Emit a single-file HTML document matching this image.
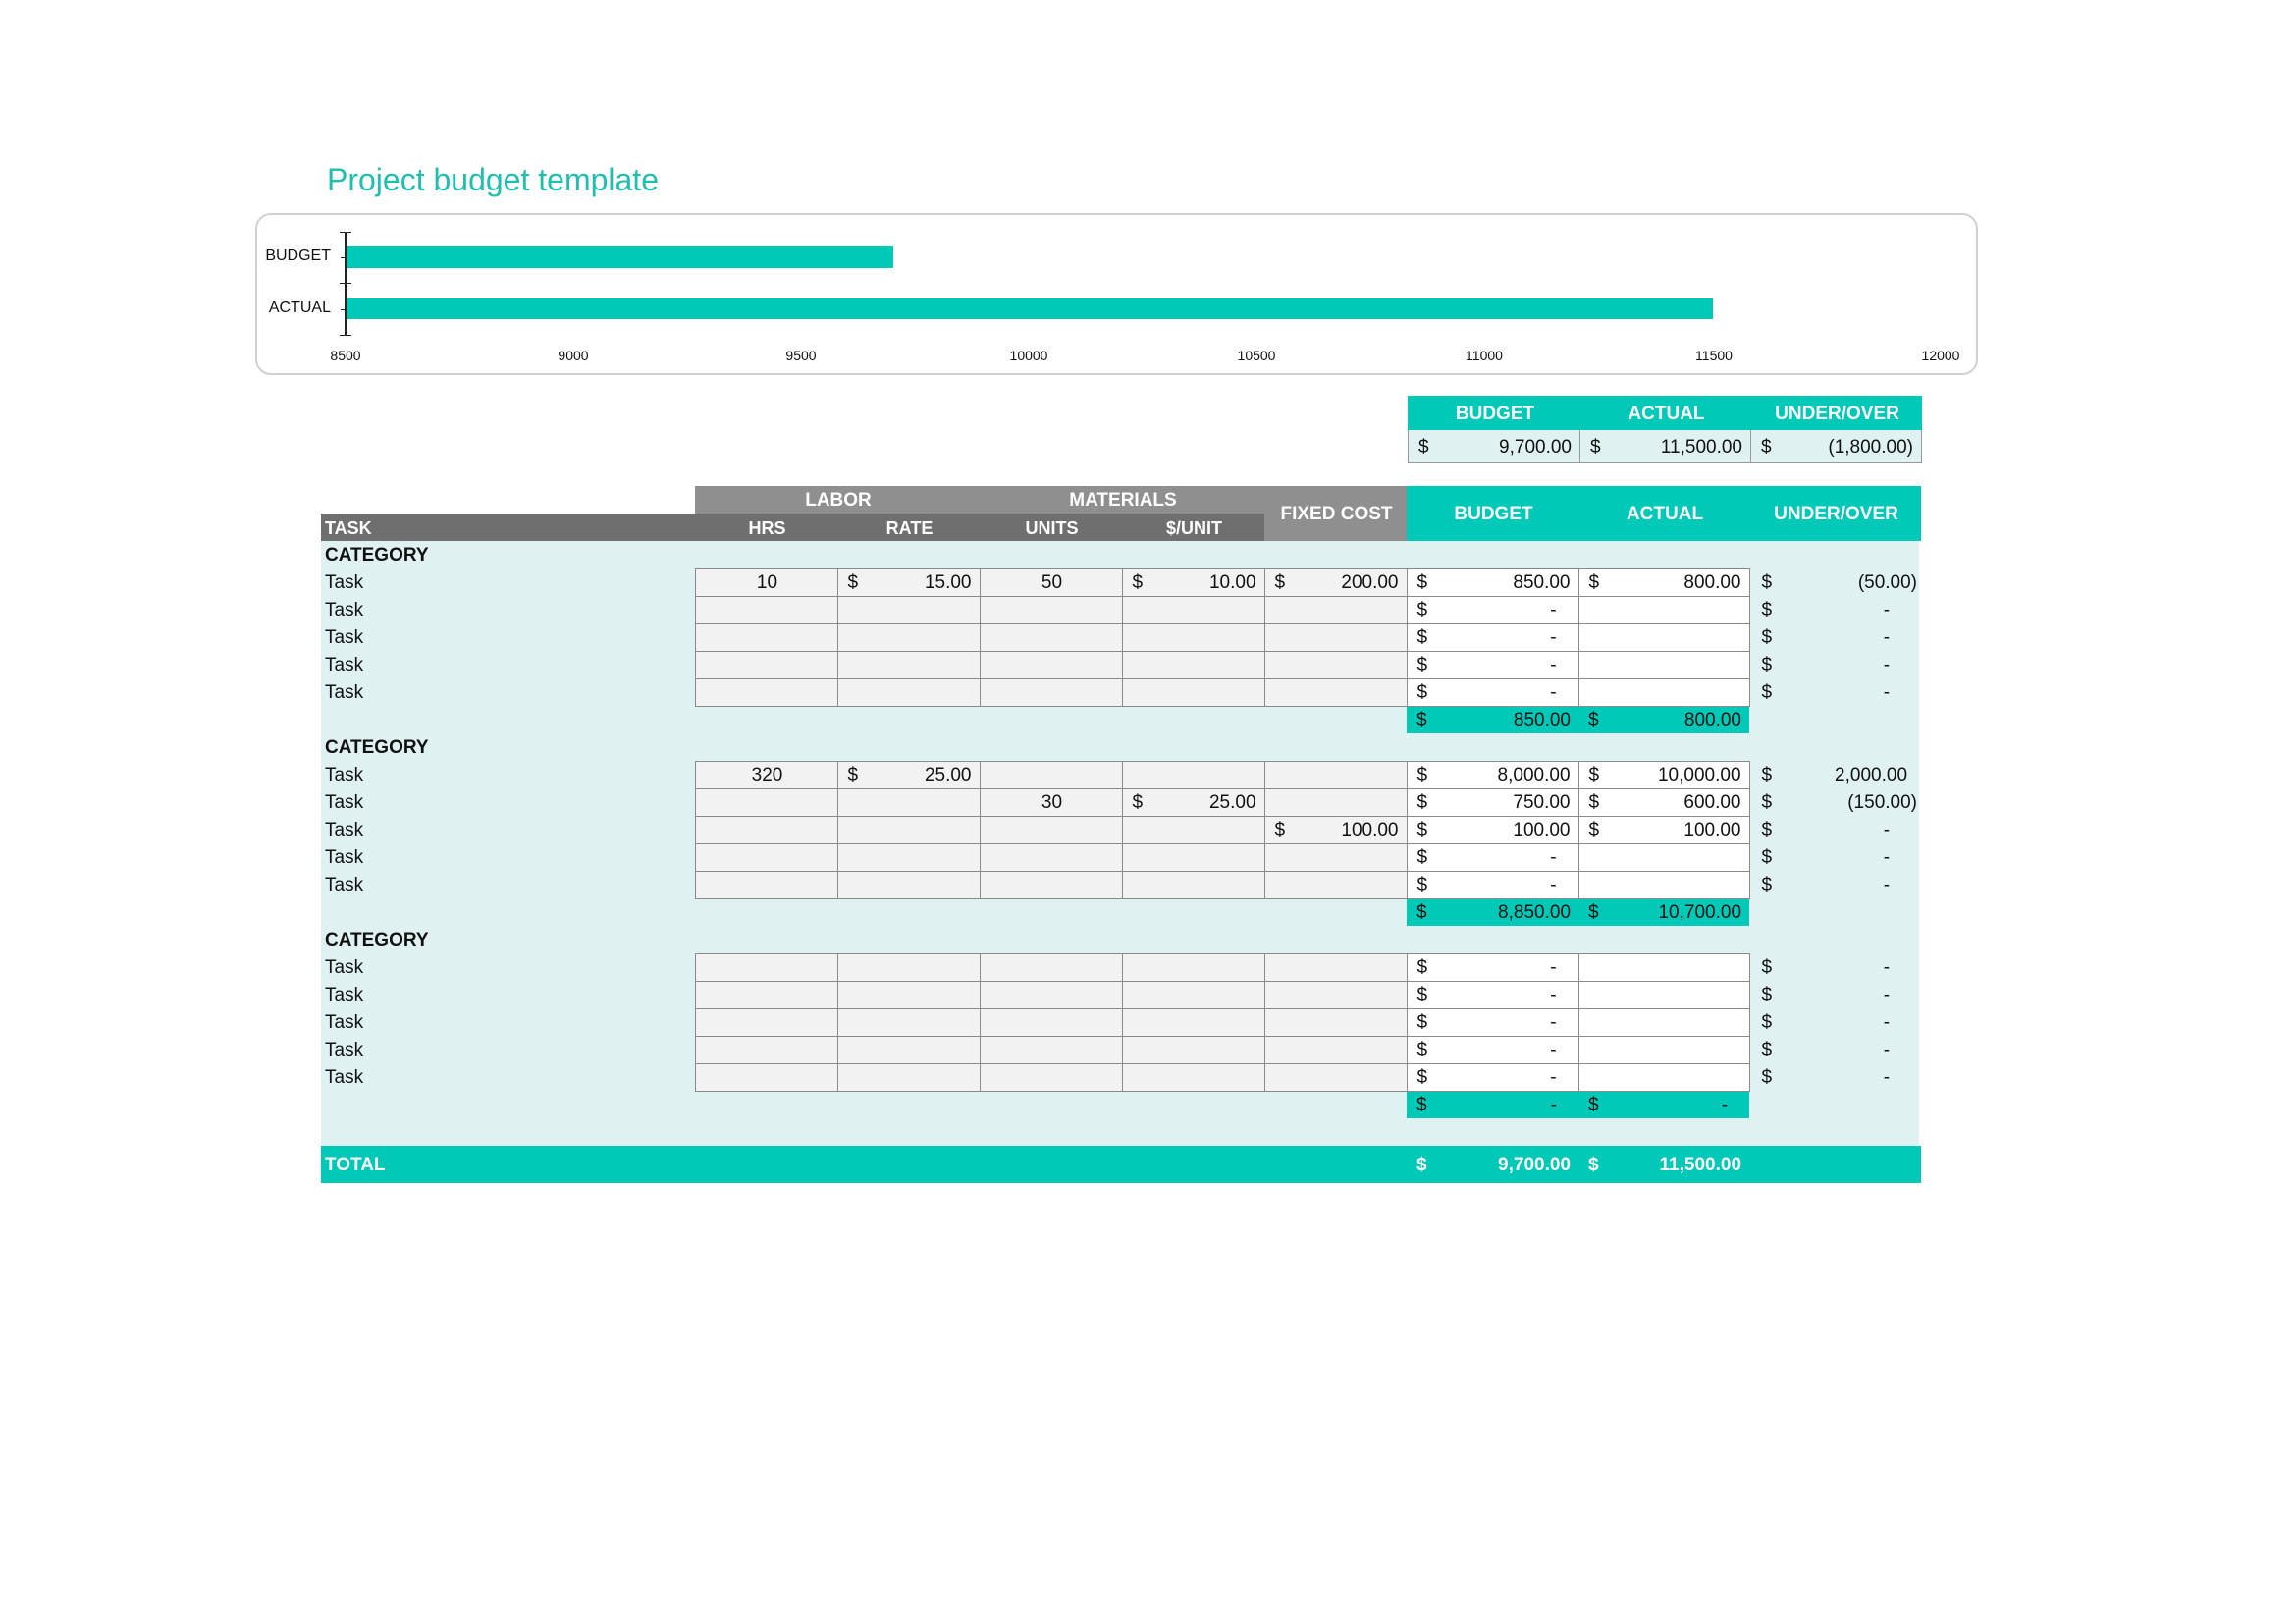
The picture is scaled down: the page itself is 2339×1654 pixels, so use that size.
<!DOCTYPE html>
<html><head><meta charset="utf-8"><style>
*{margin:0;padding:0;box-sizing:border-box}
body{width:2339px;height:1654px;background:#fff;position:relative;font-family:"Liberation Sans",Arial,sans-serif;overflow:hidden}
.a{position:absolute}
.title{left:333px;top:165px;font-size:32px;color:#1fbfad;white-space:nowrap}
.box{left:260px;top:217px;width:1755px;height:165px;border:2px solid #d0d0d0;border-radius:16px}
.lbl{font-size:16px;color:#111;width:80px;text-align:right;left:257px}
.tk{font-size:14px;color:#111;top:354px;width:80px;text-align:center}
.bar{background:#00c9b7}
.ax{background:#222}
table{border-collapse:collapse;table-layout:fixed}
td{height:28px;font-size:19px;color:#111;padding:2px 8px 0 10px;white-space:nowrap;overflow:hidden}
.sum td{border:1px solid #999;height:34px}
.sum .h{background:#00c9b7;color:#fff;font-weight:bold;text-align:center;border-color:#00c9b7}
.sum .v{background:#dff2f1;text-align:right;font-size:19px}
.d{float:left}
.main .g1{background:#8f8f8f;color:#fff;font-weight:bold;text-align:center}
.main .g2{background:#6f6f6f;color:#fff;font-weight:bold;text-align:center;font-size:18px}
.main .t{background:#00c9b7;color:#fff;font-weight:bold;text-align:center}
.main .in{background:#f2f2f2;border:1px solid #8a8a8a;text-align:center}
.main .inm{background:#f2f2f2;border:1px solid #8a8a8a;text-align:right}
.main .w{background:#fff;border:1px solid #8a8a8a;text-align:right}
.main .s{background:#00c9b7;text-align:right}
.main .u{text-align:right;padding-left:12px;padding-right:4px}
.main .tot td{background:#00c9b7;color:#fff;font-weight:bold;height:38px}
.main .tot .r{text-align:right}
.cat{font-weight:bold}
.main td.pr{padding-right:14px}
.main td.dash{padding-right:22px}
.main td.udash{padding-right:32px}
.main td.tl{padding-left:4px}
</style></head><body>
<div class="a title">Project budget template</div>
<div class="a box"></div>
<div class="a lbl" style="top:252px">BUDGET</div>
<div class="a lbl" style="top:305px">ACTUAL</div>
<div class="a ax" style="left:351px;top:236px;width:2px;height:106px"></div>
<div class="a ax" style="left:346px;top:236px;width:12px;height:1px"></div>
<div class="a ax" style="left:346px;top:288px;width:12px;height:1px"></div>
<div class="a ax" style="left:346px;top:341px;width:12px;height:1px"></div>
<div class="a ax" style="left:347px;top:262px;width:5px;height:1px"></div>
<div class="a ax" style="left:347px;top:315px;width:5px;height:1px"></div>
<div class="a bar" style="left:353px;top:251px;width:557px;height:22px"></div>
<div class="a bar" style="left:353px;top:304px;width:1392px;height:21px"></div>
<div class="a tk" style="left:312px">8500</div>
<div class="a tk" style="left:544px">9000</div>
<div class="a tk" style="left:776px">9500</div>
<div class="a tk" style="left:1008px">10000</div>
<div class="a tk" style="left:1240px">10500</div>
<div class="a tk" style="left:1472px">11000</div>
<div class="a tk" style="left:1706px">11500</div>
<div class="a tk" style="left:1937px">12000</div>

<table class="a sum" style="left:1434px;top:403px;width:523px">
<colgroup><col style="width:175px"><col style="width:174px"><col style="width:174px"></colgroup>
<tr><td class="h">BUDGET</td><td class="h">ACTUAL</td><td class="h">UNDER/OVER</td></tr>
<tr><td class="v"><span class="d">$</span>9,700.00</td><td class="v"><span class="d">$</span>11,500.00</td><td class="v"><span class="d">$</span>(1,800.00)</td></tr>
</table>

<div class="a" style="left:327px;top:551px;width:1628px;height:616px;background:#dff2f1"></div>

<table class="a main" style="left:327px;top:495px;width:1630px">
<colgroup><col style="width:381px"><col style="width:145px"><col style="width:145px"><col style="width:145px"><col style="width:145px"><col style="width:145px"><col style="width:175px"><col style="width:174px"><col style="width:175px"></colgroup>
<tr><td></td><td class="g1" colspan="2">LABOR</td><td class="g1" colspan="2">MATERIALS</td><td class="g1" rowspan="2">FIXED COST</td><td class="t" rowspan="2">BUDGET</td><td class="t" rowspan="2">ACTUAL</td><td class="t" rowspan="2">UNDER/OVER</td></tr>
<tr><td class="g2 tl" style="text-align:left">TASK</td><td class="g2">HRS</td><td class="g2">RATE</td><td class="g2">UNITS</td><td class="g2">$/UNIT</td></tr>

<tr><td class="cat tl">CATEGORY</td><td colspan="8"></td></tr>
<tr><td class="tl">Task</td><td class="in">10</td><td class="inm"><span class="d">$</span>15.00</td><td class="in">50</td><td class="inm"><span class="d">$</span>10.00</td><td class="inm"><span class="d">$</span>200.00</td><td class="w"><span class="d">$</span>850.00</td><td class="w"><span class="d">$</span>800.00</td><td class="u"><span class="d">$</span>(50.00)</td></tr>
<tr><td class="tl">Task</td><td class="in"></td><td class="in"></td><td class="in"></td><td class="in"></td><td class="in"></td><td class="w dash"><span class="d">$</span>-</td><td class="w"></td><td class="u udash"><span class="d">$</span>-</td></tr>
<tr><td class="tl">Task</td><td class="in"></td><td class="in"></td><td class="in"></td><td class="in"></td><td class="in"></td><td class="w dash"><span class="d">$</span>-</td><td class="w"></td><td class="u udash"><span class="d">$</span>-</td></tr>
<tr><td class="tl">Task</td><td class="in"></td><td class="in"></td><td class="in"></td><td class="in"></td><td class="in"></td><td class="w dash"><span class="d">$</span>-</td><td class="w"></td><td class="u udash"><span class="d">$</span>-</td></tr>
<tr><td class="tl">Task</td><td class="in"></td><td class="in"></td><td class="in"></td><td class="in"></td><td class="in"></td><td class="w dash"><span class="d">$</span>-</td><td class="w"></td><td class="u udash"><span class="d">$</span>-</td></tr>
<tr><td colspan="6"></td><td class="s"><span class="d">$</span>850.00</td><td class="s"><span class="d">$</span>800.00</td><td></td></tr>

<tr><td class="cat tl">CATEGORY</td><td colspan="8"></td></tr>
<tr><td class="tl">Task</td><td class="in">320</td><td class="inm"><span class="d">$</span>25.00</td><td class="in"></td><td class="in"></td><td class="in"></td><td class="w"><span class="d">$</span>8,000.00</td><td class="w"><span class="d">$</span>10,000.00</td><td class="u pr"><span class="d">$</span>2,000.00</td></tr>
<tr><td class="tl">Task</td><td class="in"></td><td class="in"></td><td class="in">30</td><td class="inm"><span class="d">$</span>25.00</td><td class="in"></td><td class="w"><span class="d">$</span>750.00</td><td class="w"><span class="d">$</span>600.00</td><td class="u"><span class="d">$</span>(150.00)</td></tr>
<tr><td class="tl">Task</td><td class="in"></td><td class="in"></td><td class="in"></td><td class="in"></td><td class="inm"><span class="d">$</span>100.00</td><td class="w"><span class="d">$</span>100.00</td><td class="w"><span class="d">$</span>100.00</td><td class="u udash"><span class="d">$</span>-</td></tr>
<tr><td class="tl">Task</td><td class="in"></td><td class="in"></td><td class="in"></td><td class="in"></td><td class="in"></td><td class="w dash"><span class="d">$</span>-</td><td class="w"></td><td class="u udash"><span class="d">$</span>-</td></tr>
<tr><td class="tl">Task</td><td class="in"></td><td class="in"></td><td class="in"></td><td class="in"></td><td class="in"></td><td class="w dash"><span class="d">$</span>-</td><td class="w"></td><td class="u udash"><span class="d">$</span>-</td></tr>
<tr><td colspan="6"></td><td class="s"><span class="d">$</span>8,850.00</td><td class="s"><span class="d">$</span>10,700.00</td><td></td></tr>

<tr><td class="cat tl">CATEGORY</td><td colspan="8"></td></tr>
<tr><td class="tl">Task</td><td class="in"></td><td class="in"></td><td class="in"></td><td class="in"></td><td class="in"></td><td class="w dash"><span class="d">$</span>-</td><td class="w"></td><td class="u udash"><span class="d">$</span>-</td></tr>
<tr><td class="tl">Task</td><td class="in"></td><td class="in"></td><td class="in"></td><td class="in"></td><td class="in"></td><td class="w dash"><span class="d">$</span>-</td><td class="w"></td><td class="u udash"><span class="d">$</span>-</td></tr>
<tr><td class="tl">Task</td><td class="in"></td><td class="in"></td><td class="in"></td><td class="in"></td><td class="in"></td><td class="w dash"><span class="d">$</span>-</td><td class="w"></td><td class="u udash"><span class="d">$</span>-</td></tr>
<tr><td class="tl">Task</td><td class="in"></td><td class="in"></td><td class="in"></td><td class="in"></td><td class="in"></td><td class="w dash"><span class="d">$</span>-</td><td class="w"></td><td class="u udash"><span class="d">$</span>-</td></tr>
<tr><td class="tl">Task</td><td class="in"></td><td class="in"></td><td class="in"></td><td class="in"></td><td class="in"></td><td class="w dash"><span class="d">$</span>-</td><td class="w"></td><td class="u udash"><span class="d">$</span>-</td></tr>
<tr><td colspan="6"></td><td class="s dash"><span class="d">$</span>-</td><td class="s dash"><span class="d">$</span>-</td><td></td></tr>
<tr><td colspan="9"></td></tr>
<tr class="tot"><td class="tl">TOTAL</td><td colspan="5"></td><td class="r"><span class="d">$</span>9,700.00</td><td class="r"><span class="d">$</span>11,500.00</td><td></td></tr>
</table>
</body></html>
